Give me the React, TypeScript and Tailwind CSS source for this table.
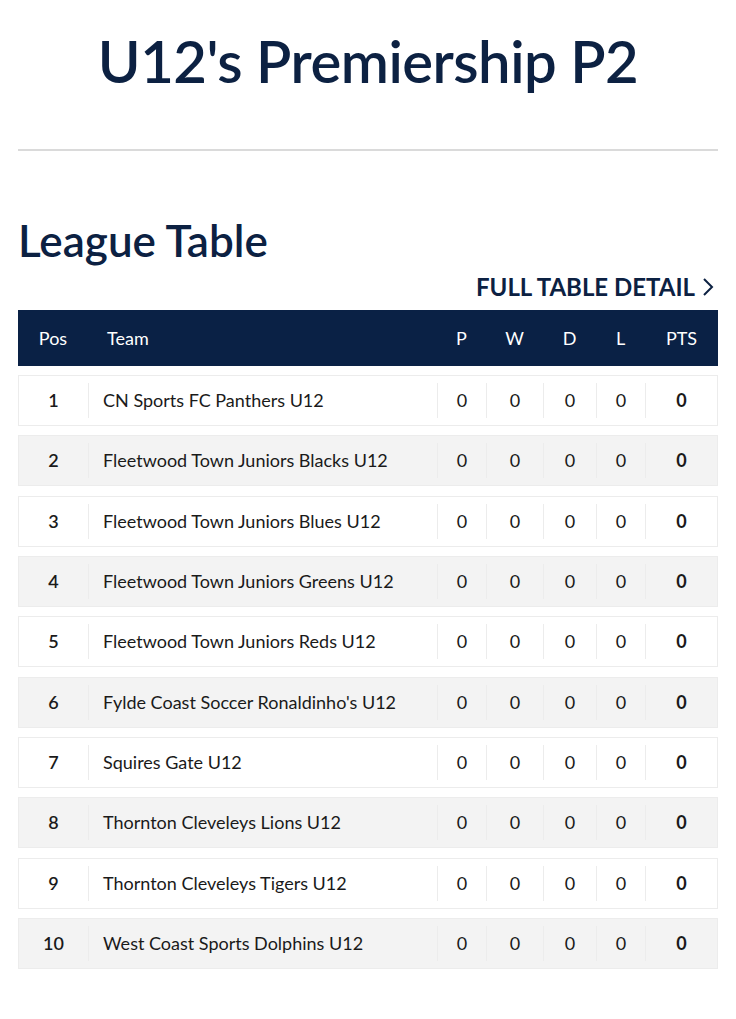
import React from 'react';

const teams = [
  'CN Sports FC Panthers U12',
  'Fleetwood Town Juniors Blacks U12',
  'Fleetwood Town Juniors Blues U12',
  'Fleetwood Town Juniors Greens U12',
  'Fleetwood Town Juniors Reds U12',
  "Fylde Coast Soccer Ronaldinho's U12",
  'Squires Gate U12',
  'Thornton Cleveleys Lions U12',
  'Thornton Cleveleys Tigers U12',
  'West Coast Sports Dolphins U12',
];

const Sep = () => <div className="w-px self-stretch my-[7px] bg-[#ececec]" />;

const App: React.FC = () => {
  return (
    <div className="w-[736px] min-h-[1019px] bg-white px-[18px] text-[#0c2142] font-['Lato','Noto_Sans',sans-serif]">
      <h1 className="pt-[27px] text-center text-[58px] leading-[68px] font-semibold tracking-[-0.5px]">
        U12's Premiership P2
      </h1>
      <div className="mt-[54px] h-[2px] bg-[#dadada]" />

      <h2 className="mt-[62px] text-[44px] leading-[54px] font-semibold">League Table</h2>

      <div className="mt-[6px] flex justify-end">
        <a className="flex items-center gap-[7px] pr-[4px] text-[24px] leading-[28px] font-bold uppercase">
          Full Table Detail
          <svg width="12" height="20" viewBox="0 0 12 20" fill="none" stroke="currentColor" strokeWidth="2">
            <path d="M2 2l8 8-8 8" />
          </svg>
        </a>
      </div>

      <div className="mt-[9px] flex h-[56px] items-center bg-[#0a2145] text-[18px] text-white">
        <div className="w-[70px] text-center">Pos</div>
        <div className="w-[349px] pl-[19px]">Team</div>
        <div className="w-[49px] text-center">P</div>
        <div className="w-[57px] text-center">W</div>
        <div className="w-[53px] text-center">D</div>
        <div className="w-[49px] text-center">L</div>
        <div className="flex-1 text-center">PTS</div>
      </div>

      <div className="mt-[9px] flex flex-col gap-[9.33px]">
        {teams.map((t, i) => (
          <div
            key={t}
            className={`flex h-[51px] items-center border border-[#ececec] text-[18px] text-[#1a1a1a] ${
              i % 2 === 1 ? 'bg-[#f3f3f3]' : 'bg-white'
            }`}
          >
            <div className="w-[69px] text-center font-semibold">{i + 1}</div>
            <Sep />
            <div className="w-[348px] pl-[14px] whitespace-nowrap">{t}</div>
            <Sep />
            <div className="w-[48px] text-center">0</div>
            <Sep />
            <div className="w-[56px] text-center">0</div>
            <Sep />
            <div className="w-[52px] text-center">0</div>
            <Sep />
            <div className="w-[48px] text-center">0</div>
            <Sep />
            <div className="flex-1 text-center font-bold">0</div>
          </div>
        ))}
      </div>
    </div>
  );
};

export default App;
